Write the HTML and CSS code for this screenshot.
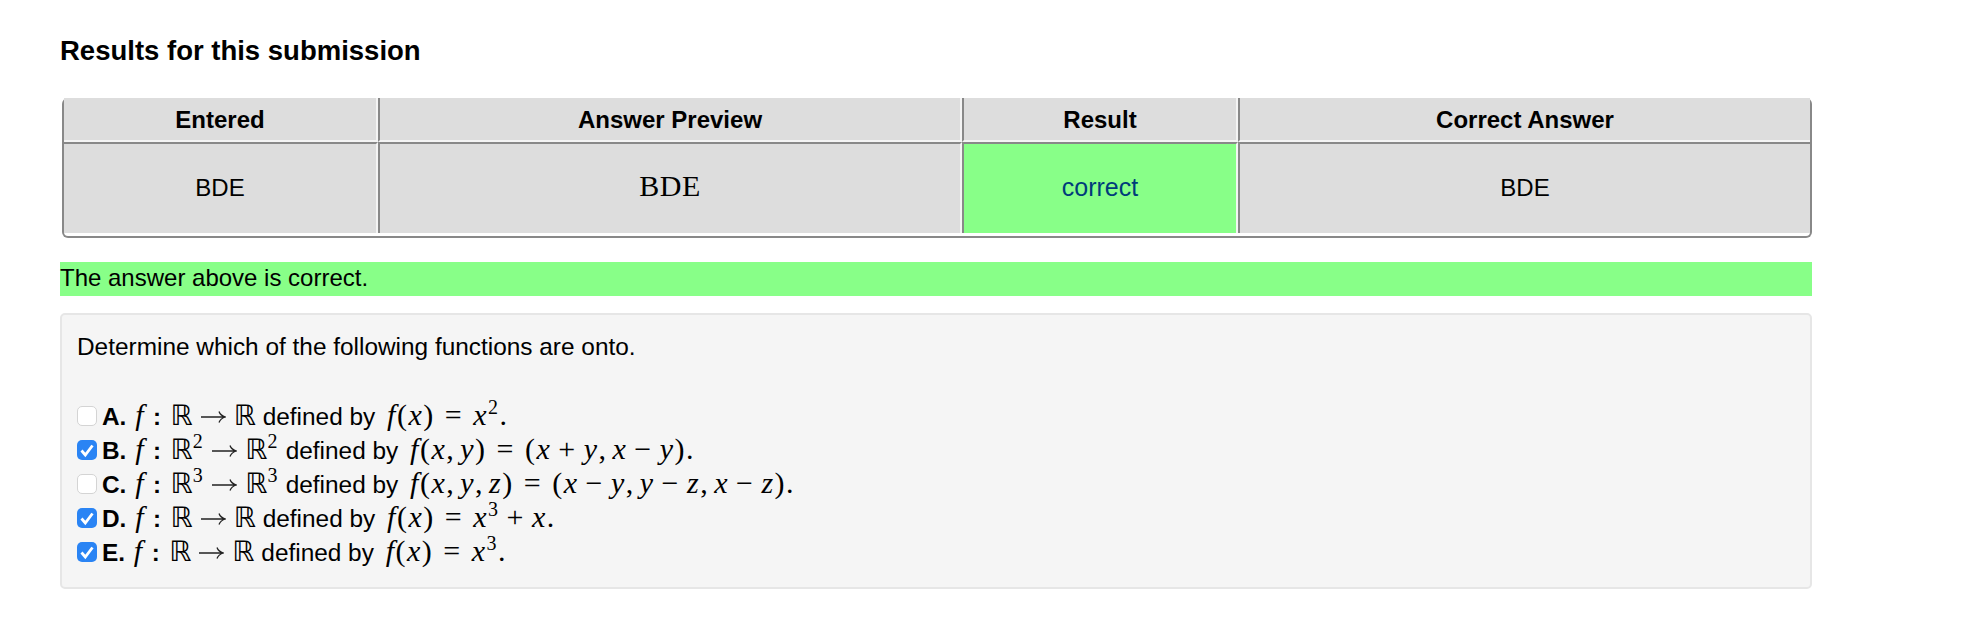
FILE: index.html
```html
<!DOCTYPE html>
<html lang="en">
<head>
    <meta charset="UTF-8">
    <title>Results for this submission</title>
    <link rel="stylesheet" href="styles.css">
</head>
<body>
    <h3 class="results-title">Results for this submission</h3>

    <table class="attempt-results">
        <tr>
            <th class="col-entered">Entered</th>
            <th class="col-preview">Answer Preview</th>
            <th class="col-result">Result</th>
            <th>Correct Answer</th>
        </tr>
        <tr>
            <td>BDE</td>
            <td class="preview">BDE</td>
            <td class="result-correct">correct</td>
            <td>BDE</td>
        </tr>
    </table>

    <div class="attempt-message">The answer above is correct.</div>

    <div class="problem">
        <p class="problem-text">Determine which of the following functions are onto.</p>

        <div class="choice">
            <span class="check"></span>
            <span class="choice-text"><b>A.</b> <span class="math"><i>f</i> <b class="colon">:</b> <span class="bb">ℝ</span><svg class="arrow" viewBox="0 0 25 16"><path d="M0 8H24M18 2.5C19 5.5 21 7 24.5 8C21 9 19 10.5 18 13.5" /></svg><span class="bb">ℝ</span></span> defined by <span class="math gap"><i>f</i>(<i>x</i>)<span class="rel">=</span><i>x</i><sup>2</sup>.</span></span>
        </div>
        <div class="choice">
            <span class="check checked"><svg viewBox="0 0 20 20"><path d="M4.5 10.5l3.8 4.5L15.5 5.5" /></svg></span>
            <span class="choice-text"><b>B.</b> <span class="math"><i>f</i> <b class="colon">:</b> <span class="bb">ℝ</span><sup>2</sup><svg class="arrow" viewBox="0 0 25 16"><path d="M0 8H24M18 2.5C19 5.5 21 7 24.5 8C21 9 19 10.5 18 13.5" /></svg><span class="bb">ℝ</span><sup>2</sup></span> defined by <span class="math gap"><i>f</i>(<i>x</i>, <i>y</i>)<span class="rel">=</span>(<i>x</i><span class="bin">+</span><i>y</i>, <i>x</i><span class="bin">−</span><i>y</i>).</span></span>
        </div>
        <div class="choice">
            <span class="check"></span>
            <span class="choice-text"><b>C.</b> <span class="math"><i>f</i> <b class="colon">:</b> <span class="bb">ℝ</span><sup>3</sup><svg class="arrow" viewBox="0 0 25 16"><path d="M0 8H24M18 2.5C19 5.5 21 7 24.5 8C21 9 19 10.5 18 13.5" /></svg><span class="bb">ℝ</span><sup>3</sup></span> defined by <span class="math gap"><i>f</i>(<i>x</i>, <i>y</i>, <i>z</i>)<span class="rel">=</span>(<i>x</i><span class="bin">−</span><i>y</i>, <i>y</i><span class="bin">−</span><i>z</i>, <i>x</i><span class="bin">−</span><i>z</i>).</span></span>
        </div>
        <div class="choice">
            <span class="check checked"><svg viewBox="0 0 20 20"><path d="M4.5 10.5l3.8 4.5L15.5 5.5" /></svg></span>
            <span class="choice-text"><b>D.</b> <span class="math"><i>f</i> <b class="colon">:</b> <span class="bb">ℝ</span><svg class="arrow" viewBox="0 0 25 16"><path d="M0 8H24M18 2.5C19 5.5 21 7 24.5 8C21 9 19 10.5 18 13.5" /></svg><span class="bb">ℝ</span></span> defined by <span class="math gap"><i>f</i>(<i>x</i>)<span class="rel">=</span><i>x</i><sup>3</sup><span class="bin">+</span><i>x</i>.</span></span>
        </div>
        <div class="choice">
            <span class="check checked"><svg viewBox="0 0 20 20"><path d="M4.5 10.5l3.8 4.5L15.5 5.5" /></svg></span>
            <span class="choice-text"><b>E.</b> <span class="math"><i>f</i> <b class="colon">:</b> <span class="bb">ℝ</span><svg class="arrow" viewBox="0 0 25 16"><path d="M0 8H24M18 2.5C19 5.5 21 7 24.5 8C21 9 19 10.5 18 13.5" /></svg><span class="bb">ℝ</span></span> defined by <span class="math gap"><i>f</i>(<i>x</i>)<span class="rel">=</span><i>x</i><sup>3</sup>.</span></span>
        </div>
    </div>
</body>
</html>
```

FILE: styles.css
```css
body {
    font-family: "Liberation Sans", Arial, sans-serif;
    font-size: 24px;
    color: #000;
    background: #fff;
    margin: 0;
    padding: 0 152px 0 60px;
}

.results-title {
    font-size: 27.5px;
    line-height: 34px;
    margin: 0;
    padding: 34px 0 30px;
}

.attempt-results {
    width: 1750px;
    margin-left: 2px;
    border-collapse: separate;
    border-spacing: 0;
    table-layout: fixed;
    border-left: 2px solid #888;
    border-right: 2px solid #888;
    border-bottom: 2px solid #888;
    border-radius: 6px;
    padding-bottom: 3px;
}

.attempt-results th,
.attempt-results td {
    background: #ddd;
    text-align: center;
    padding: 0;
    box-sizing: border-box;
    border-left: 2px solid #888;
    border-right: 2px solid #f4f4f4;
}

.attempt-results th:first-child,
.attempt-results td:first-child {
    border-left: 0;
}

.attempt-results th:last-child,
.attempt-results td:last-child {
    border-right: 0;
}

.attempt-results th {
    height: 44px;
    border-bottom: 2px solid #f4f4f4;
    font-weight: bold;
    padding-top: 2px;
}

.attempt-results td {
    height: 91px;
    border-top: 2px solid #888;
    padding-bottom: 2px;
}

.col-entered {
    width: 314px;
}

.col-preview {
    width: 584px;
}

.col-result {
    width: 276px;
}

.attempt-results td.preview {
    font-family: "Liberation Serif", serif;
    font-size: 30px;
    letter-spacing: 0.5px;
    padding-bottom: 6px;
}

.attempt-results td.result-correct {
    background: #88ff88;
    color: #003c7a;
    font-size: 25px;
}

.attempt-message {
    background: #88ff88;
    height: 34px;
    line-height: 32px;
    margin-top: 24px;
}

.problem {
    background: #f5f5f5;
    border: 2px solid #e6e6e6;
    border-radius: 5px;
    margin-top: 17px;
    height: 272px;
    padding: 0 15px;
    font-size: 24.4px;
}

.problem-text {
    margin: 0 0 -6px;
    line-height: 34px;
    padding-top: 15px;
    height: 75px;
}

.choice {
    display: flex;
    align-items: center;
    height: 34px;
    white-space: nowrap;
}

.check {
    width: 20px;
    height: 20px;
    flex: none;
    box-sizing: border-box;
    background: #fff;
    border: 1px solid #d4d4d4;
    border-radius: 5px;
    margin-right: 5px;
}

.check.checked {
    background: #2a84f4;
    border: 0;
}

.check svg {
    display: block;
    width: 20px;
    height: 20px;
    fill: none;
    stroke: #fff;
    stroke-width: 2.8;
}

.math {
    font-family: "Liberation Serif", serif;
    font-size: 30px;
    letter-spacing: 1.5px;
    word-spacing: -4px;
    line-height: 30px;
    margin-left: 2px;
}

.math.gap {
    margin-left: 5px;
}

.math sup {
    font-size: 20px;
    line-height: 0;
}

.bb {
    font-family: "DejaVu Sans", sans-serif;
    font-size: 28px;
    letter-spacing: 0;
}

.colon {
    font-family: "Liberation Sans", sans-serif;
    font-size: 24px;
    margin: 0 3px;
}

.arrow {
    width: 25px;
    height: 16px;
    margin: 0 8px 0 8px;
    vertical-align: 0;
    fill: none;
    stroke: #222;
    stroke-width: 1.3;
}

.rel {
    margin: 0 10px;
}

.bin {
    margin: 0 7px;
}
```
